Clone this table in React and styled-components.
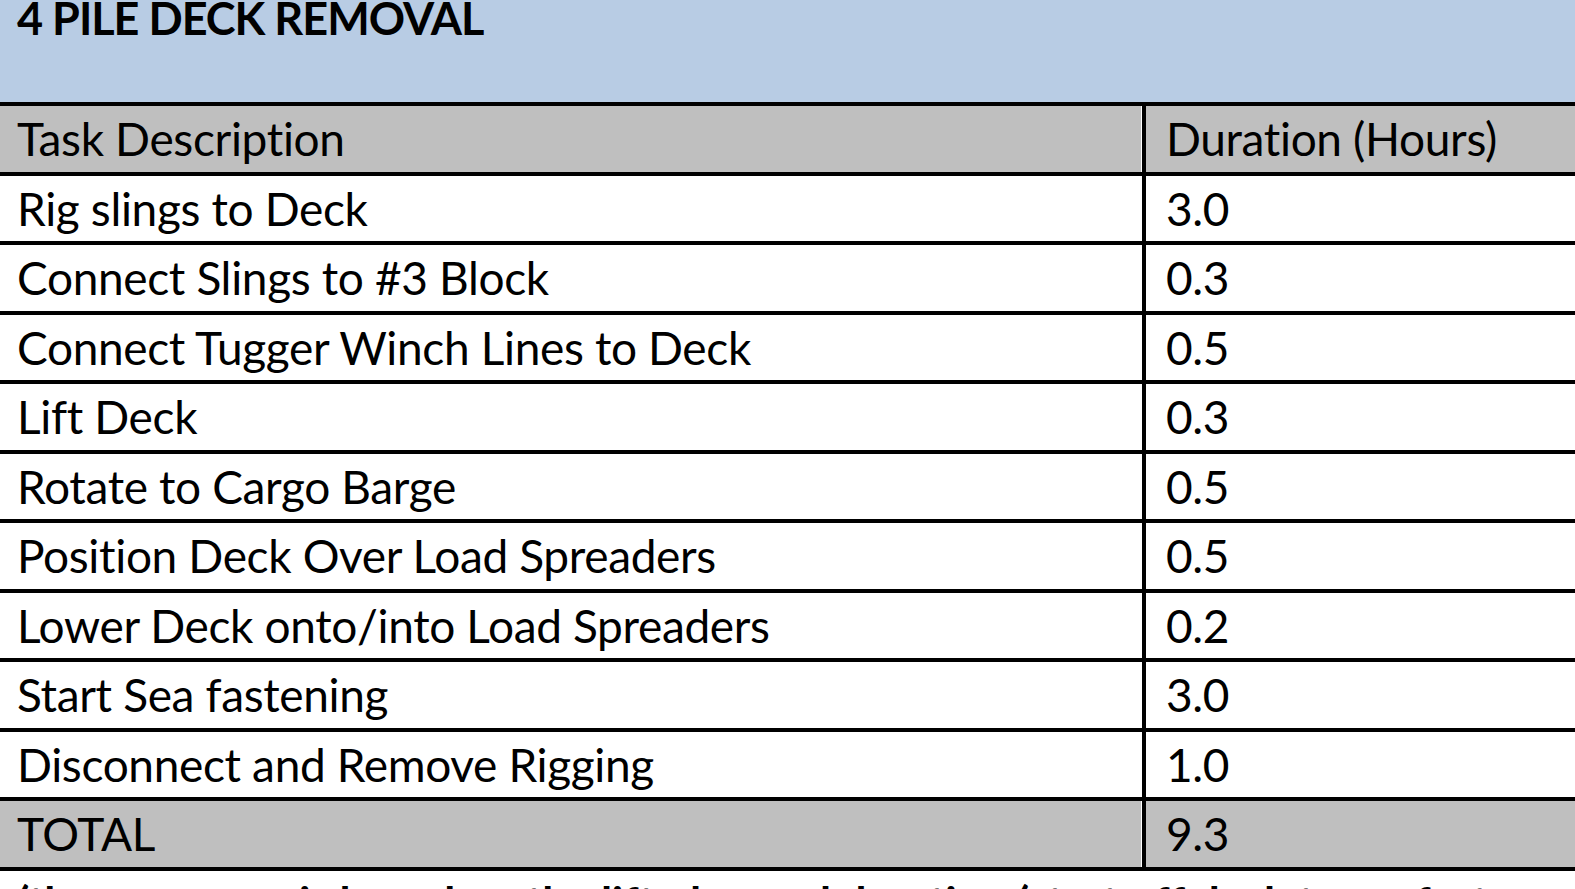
import React from "react";
import styled, { createGlobalStyle } from "styled-components";

const rows = [
  ["Rig slings to Deck", "3.0"],
  ["Connect Slings to #3 Block", "0.3"],
  ["Connect Tugger Winch Lines to Deck", "0.5"],
  ["Lift Deck", "0.3"],
  ["Rotate to Cargo Barge", "0.5"],
  ["Position Deck Over Load Spreaders", "0.5"],
  ["Lower Deck onto/into Load Spreaders", "0.2"],
  ["Start Sea fastening", "3.0"],
  ["Disconnect and Remove Rigging", "1.0"],
];

const App = () => {
  return (
    <Page>
      <GlobalStyle />
      <Banner>
        <Title>4 PILE DECK REMOVAL</Title>
      </Banner>
      <Table>
        <Row shaded>
          <Cell shaded>Task Description</Cell>
          <Cell>Duration (Hours)</Cell>
        </Row>
        {rows.map(([task, hours]) => (
          <Row key={task}>
            <Cell>{task}</Cell>
            <Cell>{hours}</Cell>
          </Row>
        ))}
        <Row shaded last>
          <Cell shaded>TOTAL</Cell>
          <Cell>9.3</Cell>
        </Row>
      </Table>
      <Note>
        (the sequence is based on the lift plan and duration (start off deck to seafastened)
      </Note>
    </Page>
  );
};

export default App;

const GlobalStyle = createGlobalStyle`
  html, body {
    margin: 0;
    padding: 0;
    background: #ffffff;
    overflow: hidden;
  }
`;

const Page = styled.div`
  width: 1575px;
  height: 889px;
  overflow: hidden;
  font-family: Lato, "Open Sans", sans-serif;
  color: #000;
`;

const Banner = styled.div`
  height: 102px;
  background: #b8cce4;
  box-sizing: border-box;
  padding-left: 17px;
  overflow: hidden;
`;

const Title = styled.div`
  font-size: 45px;
  font-weight: 700;
  letter-spacing: -1px;
  line-height: 37px;
`;

const Table = styled.div`
  display: flex;
  flex-direction: column;
`;

const Row = styled.div`
  display: grid;
  grid-template-columns: 1142px 1fr;
  flex-shrink: 0;
  box-sizing: border-box;
  border-top: 4px solid #000;
  border-bottom: ${(p) => (p.last ? "4px solid #000" : "0")};
  height: ${(p) => (p.last ? "73.5px" : "69.5px")};
  background: ${(p) => (p.shaded ? "#bfbfbf" : "#ffffff")};
`;

const Cell = styled.div`
  font-size: 46px;
  letter-spacing: -0.35px;
  line-height: 66px;
  padding-left: 17px;
  white-space: nowrap;
  & + & {
    border-left: 4px solid #000;
    padding-left: 20px;
  }
  box-shadow: ${(p) => (p.shaded ? "inset -1px 0 0 #ffffff" : "none")};
`;

const Note = styled.div`
  font-size: 45px;
  font-weight: 700;
  letter-spacing: -0.5px;
  line-height: 60px;
  padding-top: 2px;
  padding-left: 17px;
  white-space: nowrap;
`;
